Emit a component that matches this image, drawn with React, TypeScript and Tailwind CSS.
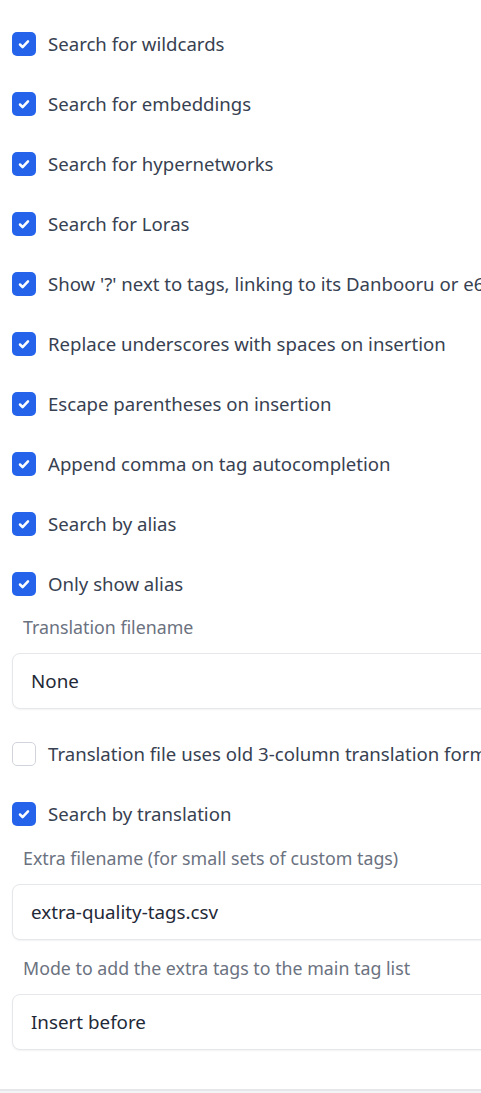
import React from 'react'

const font = { fontFamily: '"Noto Sans", Lato, sans-serif' }

function Check({ checked, label }: { checked: boolean; label: string }) {
  return (
    <label className="flex h-[60px] items-center gap-3 whitespace-nowrap pl-3">
      {checked ? (
        <span className="flex h-6 w-6 shrink-0 items-center justify-center rounded-[5px] bg-[#2563eb]">
          <svg viewBox="0 0 16 16" className="h-4 w-4" fill="none" stroke="white" strokeWidth="2.5" strokeLinecap="round" strokeLinejoin="round">
            <path d="M4 8.5l2.6 2.6 5.4-5.8" />
          </svg>
        </span>
      ) : (
        <span className="h-6 w-6 shrink-0 rounded-[5px] border border-[#d1d5db] bg-white" />
      )}
      <span className="text-[18.6px] text-[#374151]">{label}</span>
    </label>
  )
}

function Field({ label, value }: { label: string; value: string }) {
  return (
    <div className="flex flex-col pl-3">
      <span className="whitespace-nowrap pl-[11px] text-[17.8px] leading-[26px] text-[#6b7280]">{label}</span>
      <div className="mt-[13px] flex h-[56px] w-[560px] items-center rounded-lg border border-[#e5e7eb] bg-white pl-[18px] shadow-[0_1px_2px_rgba(0,0,0,0.05)]">
        <span className="text-[18.8px] text-[#1f2937]">{value}</span>
      </div>
    </div>
  )
}

export default function App() {
  const top = [
    'Search for wildcards',
    'Search for embeddings',
    'Search for hypernetworks',
    'Search for Loras',
    "Show '?' next to tags, linking to its Danbooru or e621 wiki page",
    'Replace underscores with spaces on insertion',
    'Escape parentheses on insertion',
    'Append comma on tag autocompletion',
    'Search by alias',
    'Only show alias',
  ]
  return (
    <div className="h-[1093px] w-[481px] overflow-hidden bg-white" style={font}>
      <div className="flex h-[1089px] flex-col pt-[14px]">
        {top.map((t) => (
          <Check key={t} checked label={t} />
        ))}
        <Field label="Translation filename" value="None" />
        <div className="mt-[15px]">
          <Check checked={false} label="Translation file uses old 3-column translation format instead of the new 2-column one" />
        </div>
        <Check checked label="Search by translation" />
        <div className="mt-[1px]">
          <Field label="Extra filename (for small sets of custom tags)" value="extra-quality-tags.csv" />
        </div>
        <div className="mt-[15px]">
          <Field label="Mode to add the extra tags to the main tag list" value="Insert before" />
        </div>
      </div>
      <div className="h-1 border-t-2 border-[#e5e7eb] bg-[#f3f4f6]" />
    </div>
  )
}
